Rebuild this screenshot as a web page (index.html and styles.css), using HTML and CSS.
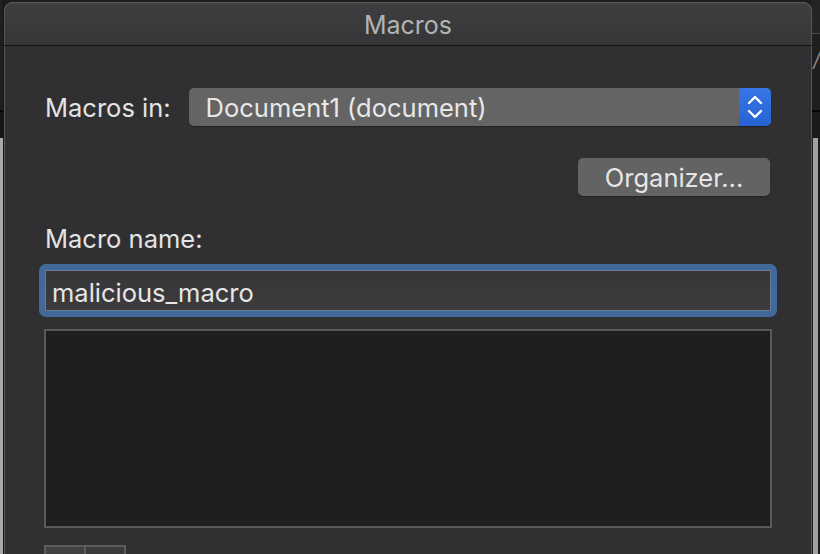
FILE: index.html
```html
<!DOCTYPE html>
<html>
<head>
<meta charset="utf-8">
<link rel="stylesheet" href="styles.css">
</head>
<body>
<div class="desktop">
  <div class="bg-left"></div>
  <div class="bg-right"><span class="bg-glyph">/</span></div>
  <div class="sheet">
    <div class="titlebar">Macros</div>
    <div class="content">
      <div class="row-in">
        <span class="label">Macros in:</span>
        <div class="popup">
          <span class="popup-text">Document1 (document)</span>
          <span class="stepper">
            <svg width="20" height="30" viewBox="0 0 20 30"><path d="M4 11 L10 5 L16 11" fill="none" stroke="#fff" stroke-width="2.4" stroke-linecap="round" stroke-linejoin="round"/><path d="M4 19 L10 25 L16 19" fill="none" stroke="#fff" stroke-width="2.4" stroke-linecap="round" stroke-linejoin="round"/></svg>
          </span>
        </div>
      </div>
      <div class="row-org">
        <button class="btn">Organizer...</button>
      </div>
      <div class="label name-label">Macro name:</div>
      <div class="focus-ring">
        <div class="field">malicious_macro</div>
      </div>
      <div class="list"></div>
      <div class="seg">
        <span class="seg-a"></span><span class="seg-b"></span>
      </div>
    </div>
  </div>
</div>
</body>
</html>
```
FILE: styles.css
```css
html, body {
  margin: 0;
  padding: 0;
  width: 820px;
  height: 554px;
  overflow: hidden;
  background: #1d1d1e;
  font-family: "Inter", "Noto Sans", sans-serif;
}
.desktop {
  position: relative;
  width: 820px;
  height: 554px;
  overflow: hidden;
}
.bg-left {
  position: absolute;
  left: 0;
  top: 0;
  width: 4px;
  height: 554px;
  background:
    linear-gradient(#1f1f1f 0, #1f1f1f 110px, #050505 110px, #050505 112px, #161616 112px, #161616 138px, #a9a9a9 138px);
  border-right: 1px solid #141414;
  box-sizing: border-box;
}
.bg-right {
  position: absolute;
  left: 811px;
  top: 0;
  width: 9px;
  height: 554px;
  background:
    linear-gradient(#242424 0, #242424 33px, #4a4a4a 33px, #4a4a4a 34px, #1e1e1e 34px, #1e1e1e 110px, #060606 110px, #060606 112px, #1a1a1a 112px, #1a1a1a 138px, transparent 138px);
}
.bg-right::after {
  content: "";
  position: absolute;
  left: 2px;
  top: 138px;
  width: 5px;
  height: 416px;
  background: #a2a2a2;
}
.bg-glyph {
  position: absolute;
  left: 2px;
  top: 50px;
  color: #8a8a8a;
  font-size: 20px;
  font-style: italic;
  line-height: 20px;
}
.sheet {
  position: absolute;
  left: 4px;
  top: 2px;
  width: 808px;
  height: 570px;
  background: #303032;
  border-radius: 9px 9px 0 0;
  box-shadow: inset 1px 0 0 #58585a, inset -1px 0 0 #58585a, inset 0 1px 0 #5a5a5c;
  overflow: hidden;
}
.titlebar {
  height: 43px;
  border-bottom: 1px solid #161616;
  background: linear-gradient(#3f3f41, #363638);
  color: #b3b3b3;
  font-size: 25px;
  line-height: 47px;
  text-align: center;
  box-shadow: inset 1px 0 0 #58585a, inset -1px 0 0 #58585a, inset 0 1px 0 #5a5a5c;
  border-radius: 9px 9px 0 0;
}
.content {
  padding: 42px 41px 0 41px;
  display: flex;
  flex-direction: column;
}
.label {
  color: #e4e4e4;
  font-size: 25.5px;
}
.row-in {
  display: flex;
  align-items: center;
  gap: 18px;
  height: 38px;
}
.popup {
  flex: 1;
  height: 38px;
  display: flex;
  align-items: center;
  background: #646464;
  border-radius: 5px;
  overflow: hidden;
  box-shadow: 0 1px 1px rgba(0,0,0,0.3);
}
.popup-text {
  flex: 1;
  padding-left: 17px;
  color: #e8e8e8;
  font-size: 25.5px;
}
.stepper {
  width: 32px;
  height: 38px;
  display: flex;
  align-items: center;
  justify-content: center;
  background: linear-gradient(#3676e6, #2762d3);
}
.row-org {
  display: flex;
  justify-content: flex-end;
  margin-top: 32px;
  padding-right: 1px;
}
.btn {
  width: 192px;
  height: 38px;
  border: none;
  border-radius: 5px;
  background: #636363;
  color: #e6e6e6;
  font-family: "Inter", "Noto Sans", sans-serif;
  font-size: 25.5px;
  padding: 0;
  box-shadow: 0 1px 1px rgba(0,0,0,0.3);
}
.name-label {
  margin-top: 28px;
  line-height: 30px;
}
.focus-ring {
  margin-top: 10px;
  margin-left: -6px;
  margin-right: -6px;
  border: 6px solid #41699a;
  border-radius: 7px;
}
.field {
  height: 39px;
  border: 1px solid #6a7c92;
  background: linear-gradient(#363638, #3c3c3e);
  color: #e6e6e6;
  font-size: 25.5px;
  line-height: 44px;
  padding-left: 6px;
  overflow: hidden;
}
.list {
  margin-top: 12px;
  margin-left: -1px;
  margin-right: -1px;
  height: 195px;
  border: 2px solid #59595b;
  background: #1f1f20;
}
.seg {
  margin-top: 17px;
  margin-left: -1px;
  display: flex;
  width: 82px;
  height: 30px;
}
.seg-a {
  width: 39px;
  border: 2px solid #5c5c5e;
  background: #414143;
}
.seg-b {
  width: 39px;
  border: 2px solid #5c5c5e;
  border-left: none;
  background: #3b3b3d;
}
```
